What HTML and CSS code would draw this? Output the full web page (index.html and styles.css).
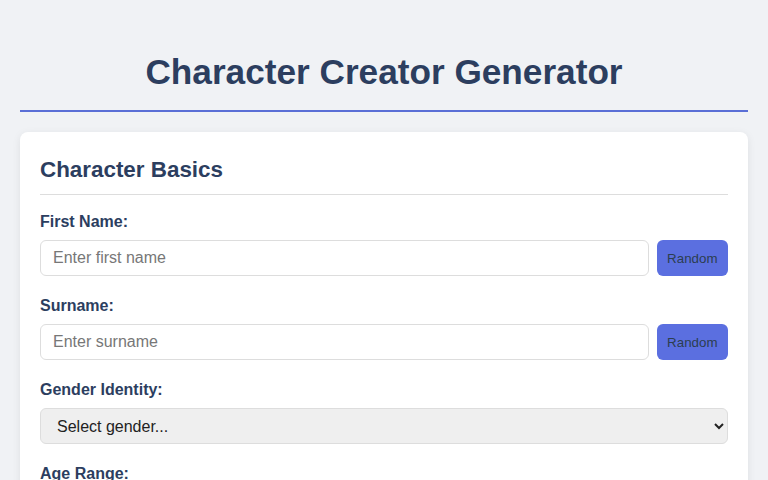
FILE: index.html
```html
<!DOCTYPE html>
<html lang="en">
<head>
<meta charset="utf-8">
<title>Character Creator Generator</title>
<link rel="stylesheet" href="styles.css">
</head>
<body>
<div class="container">
  <header class="page-header">
    <h1>Character Creator Generator</h1>
  </header>
  <section class="card">
    <h2>Character Basics</h2>
    <div class="form-group">
      <label for="first">First Name:</label>
      <div class="input-row">
        <input id="first" type="text" placeholder="Enter first name">
        <button class="btn" type="button">Random</button>
      </div>
    </div>
    <div class="form-group">
      <label for="surname">Surname:</label>
      <div class="input-row">
        <input id="surname" type="text" placeholder="Enter surname">
        <button class="btn" type="button">Random</button>
      </div>
    </div>
    <div class="form-group">
      <label for="gender">Gender Identity:</label>
      <select id="gender">
        <option>Select gender...</option>
        <option>Male</option>
        <option>Female</option>
        <option>Non-binary</option>
      </select>
    </div>
    <div class="form-group">
      <label for="age">Age Range:</label>
      <select id="age">
        <option>Select age range...</option>
      </select>
    </div>
  </section>
</div>
</body>
</html>
```
FILE: styles.css
```css
* { box-sizing: border-box; }
body {
  margin: 0;
  padding: 20px;
  background: #f0f2f5;
  font-family: "Liberation Sans", Arial, sans-serif;
  color: #2c3e50;
}
.page-header {
  padding: 32px 0 18px;
  border-bottom: 2px solid #5a6fd6;
  margin-bottom: 20px;
  text-align: center;
}
.page-header h1 {
  margin: 0;
  font-size: 35.2px;
  font-weight: bold;
  color: #2c3e5f;
}
.card {
  background: #fff;
  border-radius: 8px;
  box-shadow: 0 2px 8px rgba(0,0,0,0.08);
  padding: 20px;
}
.card h2 {
  margin: 5px 0 18px;
  padding-bottom: 11px;
  border-bottom: 1px solid #dddddd;
  font-size: 22.4px;
  color: #2c3e5f;
}
.form-group { margin-bottom: 21px; }
.form-group label {
  display: block;
  font-weight: bold;
  font-size: 16px;
  margin-bottom: 9px;
  color: #2c3e5f;
}
.input-row {
  display: flex;
  gap: 8px;
}
.input-row input {
  flex: 1;
  min-width: 0;
  padding: 8px 12px;
  border: 1px solid #dddddd;
  border-radius: 6px;
  font-family: inherit;
  font-size: 16px;
  line-height: normal;
  color: #333;
  background: #fff;
}
.input-row input::placeholder { color: #777; }
.btn {
  padding: 0 10.5px;
  border: none;
  border-radius: 6px;
  background: #5b6fe0;
  color: #2c3e50;
  font-family: inherit;
  font-size: 13.33px;
}
select {
  display: block;
  width: 100%;
  height: 36.4px;
  padding: 8px 12px;
  border: 1px solid #dddddd;
  border-radius: 6px;
  background: #efefef;
  font-family: inherit;
  font-size: 16px;
  color: #222;
}
```
